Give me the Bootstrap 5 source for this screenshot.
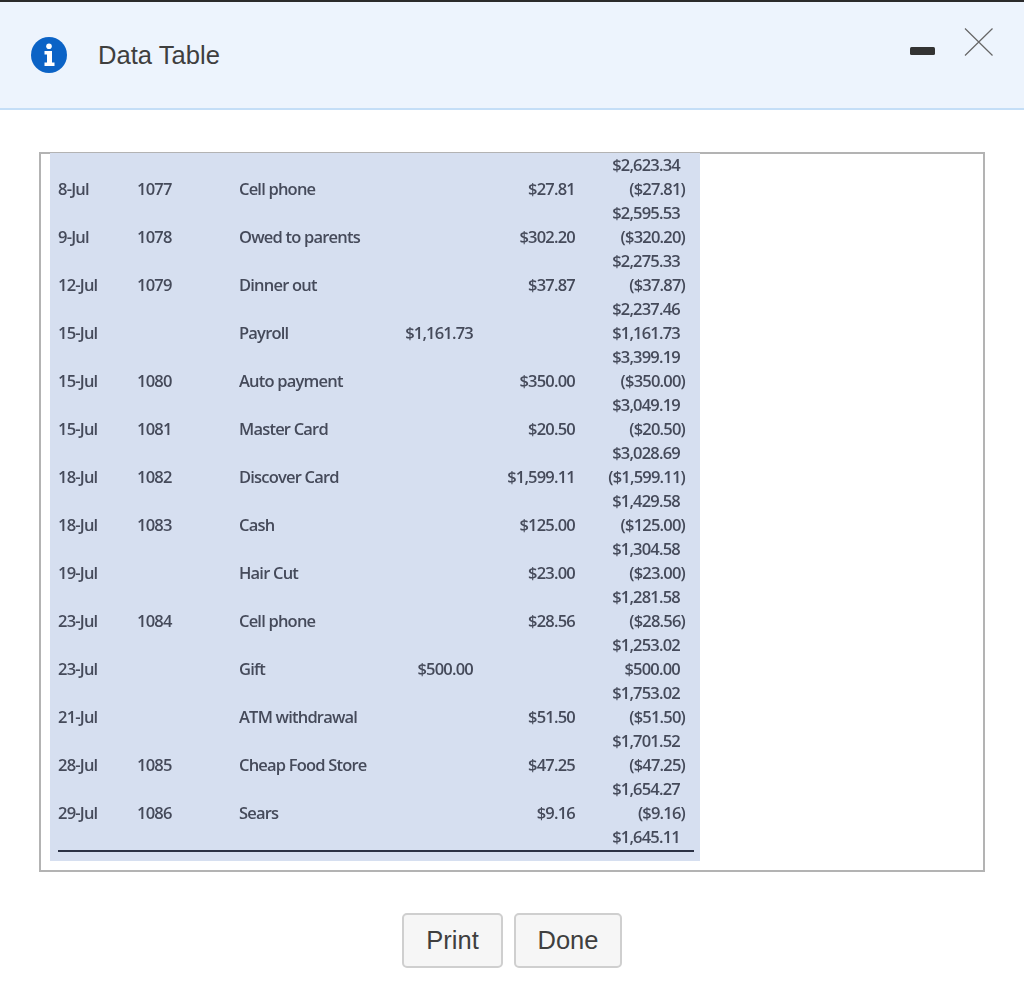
<!DOCTYPE html>
<html lang="en">
<head>
<meta charset="utf-8">
<title>Data Table</title>
<link href="https://cdn.jsdelivr.net/npm/bootstrap@5.3.0/dist/css/bootstrap.min.css" rel="stylesheet">
<style>
html, body { height: 983px; overflow: hidden; background: #fff; }
body { font-family: "Liberation Sans", Arial, sans-serif; color: #3a3a3a; }
.dlg-head { height: 110px; background: #edf4fd; border-top: 2px solid #2b2b2b; border-bottom: 2px solid #c4def7; padding: 0 30px 0 31px; }
.dlg-title { font-size: 25.6px; font-weight: 400; line-height: 30px; margin: 0 0 0 31px; color: #3f3f3f; }
.dlg-min { width: 25px; height: 8px; background: #333; border-radius: 1.5px; border: 0; padding: 0; margin: 45px 29px 0 0; }
.dlg-close { width: 30px; height: 30px; background: none; border: 0; padding: 0; margin-top: 25px; line-height: 0; }
.frame-box { margin: 42px 39px 0; width: 946px; height: 720px; border: 2px solid #b3b3b3; }
.sheet { width: 650px; height: 708px; margin-left: 9px; margin-top: -1px; background: #d6dff0; padding-left: 8px; filter: blur(.3px); }
.sheet-table { width: 636px; margin-top: -1px; table-layout: fixed; border-collapse: collapse; font-family: "Open Sans", sans-serif; font-size: 16.5px; font-weight: 600; letter-spacing: -.8px; color: #454a5a; border-bottom: 2px solid #2c3245; }
.sheet-table td { height: 24px; padding: 0; line-height: 24px; white-space: nowrap; }
.sheet-table tr:last-child td { height: 25px; padding-bottom: 1px; }
.amt { text-align: right; }
.bal { text-align: right; padding-right: 14px !important; }
.neg { padding-right: 9px !important; }
.foot-row { margin-top: 41px; gap: 11px; }
.act-btn { height: 55px; font-size: 25.5px; line-height: 1; color: #3f3f3f; background: #f6f6f6; border: 2px solid #cfcfcf; border-radius: 5px; padding: 0; }
.act-print { width: 101px; }
.act-done { width: 108px; }
</style>
</head>
<body>
<header class="dlg-head d-flex align-items-center">
  <svg width="36" height="36" viewBox="0 0 36 36" aria-hidden="true">
    <circle cx="18" cy="18" r="18" fill="#0b63c6"/>
    <circle cx="18" cy="9.2" r="2.8" fill="#fff"/>
    <path d="M13.5 14h7.5v11.5h2.5V29h-10v-3.5H16v-8h-2.5z" fill="#fff"/>
  </svg>
  <h1 class="dlg-title">Data Table</h1>
  <div class="ms-auto d-flex align-items-start align-self-start">
    <button class="dlg-min" aria-label="Minimize"></button>
    <button class="dlg-close" aria-label="Close">
      <svg width="30" height="30" viewBox="0 0 30 30"><path d="M1 1.5l27.5 27M28.5 1.5L1 28.5" stroke="#666" stroke-width="1.2" fill="none"/></svg>
    </button>
  </div>
</header>
<main class="frame-box">
  <div class="sheet">
    <table class="sheet-table">
      <colgroup><col style="width:79px"><col style="width:102px"><col style="width:150px"><col style="width:84px"><col style="width:102px"><col style="width:119px"></colgroup>
      <tbody>
      <tr><td></td><td></td><td></td><td></td><td></td><td class="bal">$2,623.34</td></tr>
      <tr><td>8-Jul</td><td>1077</td><td>Cell phone</td><td class="amt"></td><td class="amt">$27.81</td><td class="bal neg">($27.81)</td></tr>
      <tr><td></td><td></td><td></td><td></td><td></td><td class="bal">$2,595.53</td></tr>
      <tr><td>9-Jul</td><td>1078</td><td>Owed to parents</td><td class="amt"></td><td class="amt">$302.20</td><td class="bal neg">($320.20)</td></tr>
      <tr><td></td><td></td><td></td><td></td><td></td><td class="bal">$2,275.33</td></tr>
      <tr><td>12-Jul</td><td>1079</td><td>Dinner out</td><td class="amt"></td><td class="amt">$37.87</td><td class="bal neg">($37.87)</td></tr>
      <tr><td></td><td></td><td></td><td></td><td></td><td class="bal">$2,237.46</td></tr>
      <tr><td>15-Jul</td><td></td><td>Payroll</td><td class="amt">$1,161.73</td><td class="amt"></td><td class="bal">$1,161.73</td></tr>
      <tr><td></td><td></td><td></td><td></td><td></td><td class="bal">$3,399.19</td></tr>
      <tr><td>15-Jul</td><td>1080</td><td>Auto payment</td><td class="amt"></td><td class="amt">$350.00</td><td class="bal neg">($350.00)</td></tr>
      <tr><td></td><td></td><td></td><td></td><td></td><td class="bal">$3,049.19</td></tr>
      <tr><td>15-Jul</td><td>1081</td><td>Master Card</td><td class="amt"></td><td class="amt">$20.50</td><td class="bal neg">($20.50)</td></tr>
      <tr><td></td><td></td><td></td><td></td><td></td><td class="bal">$3,028.69</td></tr>
      <tr><td>18-Jul</td><td>1082</td><td>Discover Card</td><td class="amt"></td><td class="amt">$1,599.11</td><td class="bal neg">($1,599.11)</td></tr>
      <tr><td></td><td></td><td></td><td></td><td></td><td class="bal">$1,429.58</td></tr>
      <tr><td>18-Jul</td><td>1083</td><td>Cash</td><td class="amt"></td><td class="amt">$125.00</td><td class="bal neg">($125.00)</td></tr>
      <tr><td></td><td></td><td></td><td></td><td></td><td class="bal">$1,304.58</td></tr>
      <tr><td>19-Jul</td><td></td><td>Hair Cut</td><td class="amt"></td><td class="amt">$23.00</td><td class="bal neg">($23.00)</td></tr>
      <tr><td></td><td></td><td></td><td></td><td></td><td class="bal">$1,281.58</td></tr>
      <tr><td>23-Jul</td><td>1084</td><td>Cell phone</td><td class="amt"></td><td class="amt">$28.56</td><td class="bal neg">($28.56)</td></tr>
      <tr><td></td><td></td><td></td><td></td><td></td><td class="bal">$1,253.02</td></tr>
      <tr><td>23-Jul</td><td></td><td>Gift</td><td class="amt">$500.00</td><td class="amt"></td><td class="bal">$500.00</td></tr>
      <tr><td></td><td></td><td></td><td></td><td></td><td class="bal">$1,753.02</td></tr>
      <tr><td>21-Jul</td><td></td><td>ATM withdrawal</td><td class="amt"></td><td class="amt">$51.50</td><td class="bal neg">($51.50)</td></tr>
      <tr><td></td><td></td><td></td><td></td><td></td><td class="bal">$1,701.52</td></tr>
      <tr><td>28-Jul</td><td>1085</td><td>Cheap Food Store</td><td class="amt"></td><td class="amt">$47.25</td><td class="bal neg">($47.25)</td></tr>
      <tr><td></td><td></td><td></td><td></td><td></td><td class="bal">$1,654.27</td></tr>
      <tr><td>29-Jul</td><td>1086</td><td>Sears</td><td class="amt"></td><td class="amt">$9.16</td><td class="bal neg">($9.16)</td></tr>
      <tr><td></td><td></td><td></td><td></td><td></td><td class="bal">$1,645.11</td></tr>
      </tbody>
    </table>
  </div>
</main>
<div class="foot-row d-flex justify-content-center">
  <button class="btn act-btn act-print">Print</button>
  <button class="btn act-btn act-done">Done</button>
</div>
<script src="https://cdn.jsdelivr.net/npm/bootstrap@5.3.0/dist/js/bootstrap.bundle.min.js"></script>
</body>
</html>
